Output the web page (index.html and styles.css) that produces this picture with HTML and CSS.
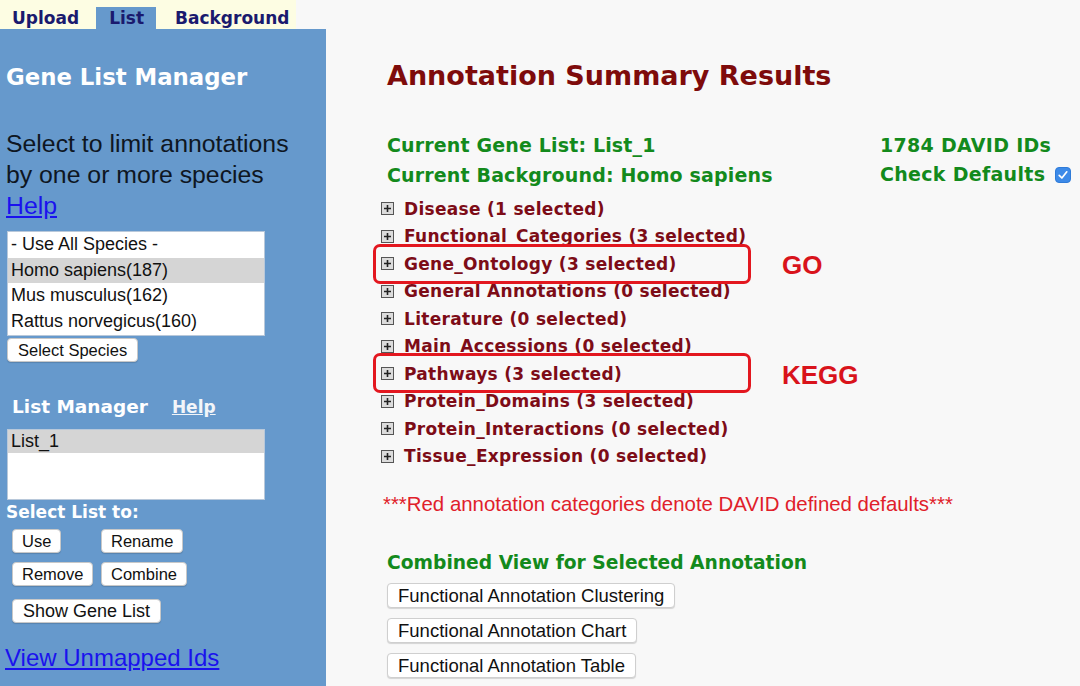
FILE: index.html
```html
<!DOCTYPE html>
<html>
<head>
<meta charset="utf-8">
<link rel="stylesheet" href="styles.css">
</head>
<body>
<div class="page">
  <aside class="side">
    <div class="tabs">
      <span class="tab">Upload</span>
      <span class="tab tab-on">List</span>
      <span class="tab tab-bg">Background</span>
    </div>
    <div class="panel">
      <h2 class="panel-title">Gene List Manager</h2>
      <p class="intro">Select to limit annotations<br>by one or more species<br><a class="link" href="#">Help</a></p>
      <div class="listbox species">
        <div class="opt">- Use All Species -</div>
        <div class="opt sel">Homo sapiens(187)</div>
        <div class="opt">Mus musculus(162)</div>
        <div class="opt">Rattus norvegicus(160)</div>
      </div>
      <button class="btn btn-species">Select Species</button>
      <div class="lm-head">
        <span class="lm-title">List Manager</span>
        <a class="lm-help" href="#">Help</a>
      </div>
      <div class="listbox lists">
        <div class="opt sel">List_1</div>
      </div>
      <div class="sl-title">Select List to:</div>
      <div class="btn-grid">
        <button class="btn">Use</button>
        <button class="btn">Rename</button>
        <button class="btn">Remove</button>
        <button class="btn">Combine</button>
      </div>
      <button class="btn btn-show">Show Gene List</button>
      <a class="link unmapped" href="#">View Unmapped Ids</a>
    </div>
  </aside>
  <main class="main">
    <h1 class="title">Annotation Summary Results</h1>
    <div class="info">
      <div class="info-left">
        <div class="green">Current Gene List: List_1</div>
        <div class="green">Current Background: Homo sapiens</div>
      </div>
      <div class="info-right">
        <div class="green">1784 DAVID IDs</div>
        <div class="green check-row">Check Defaults
          <span class="checkbox"><svg width="16" height="16" viewBox="0 0 16 16"><rect x="0.5" y="0.5" width="15" height="15" rx="3.5" fill="#3d8ae8" stroke="#2f7bd8"/><path d="M4.2 8.3 L6.9 11 L11.8 4.8" fill="none" stroke="#fff" stroke-width="1.7" stroke-linecap="round" stroke-linejoin="round"/></svg></span>
        </div>
      </div>
    </div>
    <div class="cats">
      <div class="cat"><svg class="plus" width="13" height="13" viewBox="0 0 13 13"><rect x="0.5" y="0.5" width="12" height="12" fill="#dcdcdc" stroke="#555"/><path d="M3 6.5 H10 M6.5 3 V10" stroke="#222" stroke-width="1.6"/></svg><span>Disease (1 selected)</span></div>
      <div class="cat"><svg class="plus" width="13" height="13" viewBox="0 0 13 13"><rect x="0.5" y="0.5" width="12" height="12" fill="#dcdcdc" stroke="#555"/><path d="M3 6.5 H10 M6.5 3 V10" stroke="#222" stroke-width="1.6"/></svg><span>Functional_Categories (3 selected)</span></div>
      <div class="cat"><svg class="plus" width="13" height="13" viewBox="0 0 13 13"><rect x="0.5" y="0.5" width="12" height="12" fill="#dcdcdc" stroke="#555"/><path d="M3 6.5 H10 M6.5 3 V10" stroke="#222" stroke-width="1.6"/></svg><span>Gene_Ontology (3 selected)</span></div>
      <div class="cat"><svg class="plus" width="13" height="13" viewBox="0 0 13 13"><rect x="0.5" y="0.5" width="12" height="12" fill="#dcdcdc" stroke="#555"/><path d="M3 6.5 H10 M6.5 3 V10" stroke="#222" stroke-width="1.6"/></svg><span>General Annotations (0 selected)</span></div>
      <div class="cat"><svg class="plus" width="13" height="13" viewBox="0 0 13 13"><rect x="0.5" y="0.5" width="12" height="12" fill="#dcdcdc" stroke="#555"/><path d="M3 6.5 H10 M6.5 3 V10" stroke="#222" stroke-width="1.6"/></svg><span>Literature (0 selected)</span></div>
      <div class="cat"><svg class="plus" width="13" height="13" viewBox="0 0 13 13"><rect x="0.5" y="0.5" width="12" height="12" fill="#dcdcdc" stroke="#555"/><path d="M3 6.5 H10 M6.5 3 V10" stroke="#222" stroke-width="1.6"/></svg><span>Main_Accessions (0 selected)</span></div>
      <div class="cat"><svg class="plus" width="13" height="13" viewBox="0 0 13 13"><rect x="0.5" y="0.5" width="12" height="12" fill="#dcdcdc" stroke="#555"/><path d="M3 6.5 H10 M6.5 3 V10" stroke="#222" stroke-width="1.6"/></svg><span>Pathways (3 selected)</span></div>
      <div class="cat"><svg class="plus" width="13" height="13" viewBox="0 0 13 13"><rect x="0.5" y="0.5" width="12" height="12" fill="#dcdcdc" stroke="#555"/><path d="M3 6.5 H10 M6.5 3 V10" stroke="#222" stroke-width="1.6"/></svg><span>Protein_Domains (3 selected)</span></div>
      <div class="cat"><svg class="plus" width="13" height="13" viewBox="0 0 13 13"><rect x="0.5" y="0.5" width="12" height="12" fill="#dcdcdc" stroke="#555"/><path d="M3 6.5 H10 M6.5 3 V10" stroke="#222" stroke-width="1.6"/></svg><span>Protein_Interactions (0 selected)</span></div>
      <div class="cat"><svg class="plus" width="13" height="13" viewBox="0 0 13 13"><rect x="0.5" y="0.5" width="12" height="12" fill="#dcdcdc" stroke="#555"/><path d="M3 6.5 H10 M6.5 3 V10" stroke="#222" stroke-width="1.6"/></svg><span>Tissue_Expression (0 selected)</span></div>
      <div class="mark mark-go"></div>
      <div class="mark mark-kegg"></div>
      <div class="mark-label label-go">GO</div>
      <div class="mark-label label-kegg">KEGG</div>
    </div>
    <p class="note">***Red annotation categories denote DAVID defined defaults***</p>
    <div class="green combined">Combined View for Selected Annotation</div>
    <div class="views">
      <button class="vbtn">Functional Annotation Clustering</button>
      <button class="vbtn">Functional Annotation Chart</button>
      <button class="vbtn">Functional Annotation Table</button>
    </div>
  </main>
</div>
</body>
</html>
```
FILE: styles.css
```css
html, body {
  margin: 0;
  padding: 0;
  background: #f8f8f8;
}
body {
  width: 1080px;
  height: 686px;
  overflow: hidden;
  font-family: "Liberation Sans", Arial, sans-serif;
}
.page {
  display: flex;
  align-items: stretch;
  height: 686px;
}
.side {
  width: 326px;
  flex: none;
  display: flex;
  flex-direction: column;
}
.tabs {
  display: flex;
  align-items: flex-end;
  width: 296px;
  height: 29px;
  box-sizing: border-box;
  padding: 0 6px 0 12px;
  background: #fdfde3;
  font-family: "DejaVu Sans", Verdana, sans-serif;
  font-weight: bold;
  font-size: 17px;
  color: #1a1a6e;
}
.tab {
  line-height: 22px;
  height: 22px;
}
.tab-on {
  margin-left: 17px;
  padding: 0 12px 0 13px;
  background: #6699cc;
}
.tab-bg {
  margin-left: 19px;
}
.panel {
  flex: 1;
  background: #6699cc;
  padding: 0 0 0 6px;
  display: flex;
  flex-direction: column;
  align-items: flex-start;
  color: #0e1622;
}
.panel-title {
  margin: 33px 0 0 0;
  font-family: "DejaVu Sans", Verdana, sans-serif;
  font-size: 22.8px;
  line-height: 30px;
  color: #fff;
}
.intro {
  margin: 35.5px 0 0 0;
  font-size: 24.8px;
  line-height: 31px;
}
.link {
  color: #1a12ee;
  text-decoration: underline;
}
.listbox {
  margin: 10.5px 0 0 1px;
  width: 258px;
  background: #fff;
  box-sizing: border-box;
  border: 1px solid #b8c8da;
  font-size: 18px;
}
.species {
  height: 105px;
  padding-top: 0;
}
.opt {
  height: 25.5px;
  line-height: 24px;
  padding-left: 3px;
  color: #111;
}
.opt.sel {
  background: #d5d5d5;
}
.btn {
  font-family: "Liberation Sans", Arial, sans-serif;
  font-size: 16.5px;
  line-height: 20px;
  height: 24px;
  padding: 0 9px;
  background: #fff;
  color: #111;
  border: 1px solid #c8c8c8;
  border-radius: 4px;
  box-shadow: 0 1px 1px rgba(0,0,0,0.15);
}
.btn-species {
  margin: 2px 0 0 1px;
  padding: 0 10px;
}
.lm-head {
  margin: 32px 0 0 6px;
  display: flex;
  gap: 24px;
  font-family: "DejaVu Sans", Verdana, sans-serif;
  font-weight: bold;
  line-height: 26px;
  color: #fff;
}
.lm-title {
  font-size: 18.5px;
}
.lm-help {
  font-size: 17px;
  color: #f2f5f9;
  text-decoration: underline;
}
.lists {
  margin-top: 9px;
  height: 71px;
}
.lists .opt {
  height: 23px;
  line-height: 22px;
}
.sl-title {
  margin-top: 1px;
  font-family: "DejaVu Sans", Verdana, sans-serif;
  font-weight: bold;
  font-size: 17px;
  line-height: 22px;
  color: #fff;
}
.btn-grid {
  margin: 6px 0 0 6px;
  display: grid;
  grid-template-columns: 89px auto;
  row-gap: 9px;
  justify-items: start;
}
.btn-show {
  margin: 13px 0 0 6px;
  font-size: 18px;
  padding: 0 10px;
}
.unmapped {
  margin: 20px 0 0 -1px;
  font-size: 24px;
  line-height: 30px;
}
.main {
  flex: 1;
  padding-left: 61px;
  font-family: "DejaVu Sans", Verdana, sans-serif;
}
.title {
  margin: 60px 0 0 0;
  font-size: 27px;
  line-height: 32px;
  color: #7e0b0b;
}
.info {
  margin-top: 38px;
  display: grid;
  grid-template-columns: 493px auto;
}
.green {
  font-weight: bold;
  font-size: 19px;
  line-height: 30px;
  letter-spacing: 0.15px;
  color: #138a1c;
}
.info-right .green {
  letter-spacing: 0.3px;
}
.check-row {
  display: flex;
  align-items: center;
  gap: 10px;
  line-height: 28px;
}
.checkbox {
  display: flex;
  margin-top: 2px;
}
.cats {
  position: relative;
  margin: 5px 0 0 -6px;
}
.cat {
  display: flex;
  align-items: center;
  gap: 10px;
  height: 27.5px;
  font-weight: bold;
  font-size: 17px;
  letter-spacing: 0.3px;
  color: #7d0c17;
}
.plus {
  flex: none;
}
.mark {
  position: absolute;
  left: -8px;
  width: 378px;
  height: 40px;
  box-sizing: border-box;
  border: 3px solid #e3171f;
  border-radius: 7px;
}
.mark-go {
  top: 49px;
}
.mark-kegg {
  top: 158px;
}
.mark-label {
  position: absolute;
  left: 401px;
  font-family: "Liberation Sans", Arial, sans-serif;
  font-weight: bold;
  font-size: 26px;
  line-height: 30px;
  color: #d9131b;
}
.label-go {
  top: 55px;
}
.label-kegg {
  top: 165px;
}
.note {
  margin: 22px 0 0 -4px;
  font-family: "Liberation Sans", Arial, sans-serif;
  font-size: 20.4px;
  line-height: 24px;
  color: #e0202a;
}
.combined {
  margin-top: 34px;
  line-height: 26px;
  letter-spacing: 0;
  font-size: 18.7px;
}
.views {
  margin-top: 7px;
  display: flex;
  flex-direction: column;
  align-items: flex-start;
  gap: 10px;
}
.vbtn {
  font-family: "Liberation Sans", Arial, sans-serif;
  font-size: 18.5px;
  line-height: 21px;
  height: 25px;
  padding: 0 10px;
  background: #fff;
  color: #111;
  border: 1px solid #cfcfcf;
  border-radius: 4px;
  box-shadow: 0 1px 1px rgba(0,0,0,0.15);
}
```
